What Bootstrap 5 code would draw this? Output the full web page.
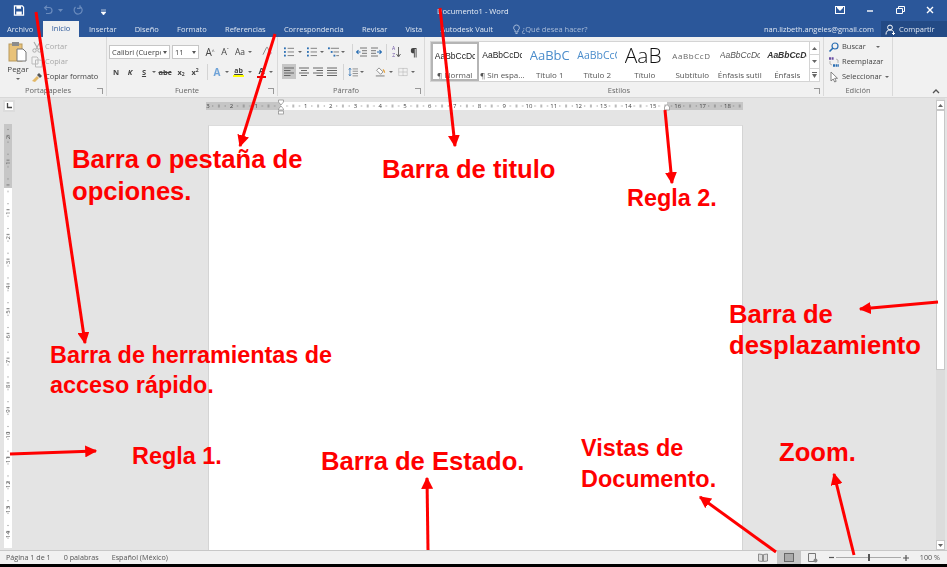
<!DOCTYPE html>
<html lang="es"><head><meta charset="utf-8"><title>Documento1 - Word</title>
<link href="https://cdn.jsdelivr.net/npm/bootstrap@5.3.0/dist/css/bootstrap.min.css" rel="stylesheet">
<style>
html,body{width:947px;height:567px;overflow:hidden;margin:0;background:#000}
body{font-family:"Open Sans","Liberation Sans",sans-serif;font-size:7.5px;color:#444;position:relative}
svg{display:block;flex:none}
.defs-holder{position:absolute}
.l1{margin-left:1px}.l2{margin-left:2px}.l3{margin-left:3px}.l4{margin-left:4px}.l5{margin-left:5px}.l6{margin-left:6px}.l7{margin-left:7px}.l9{margin-left:9px}.l10{margin-left:10px}.l11{margin-left:11px}.l15{margin-left:15px}.l17{margin-left:17px}.l18{margin-left:18px}
.w9{width:9px}.w11{width:11px}.w12{width:12px}.w14{width:14px}.w18{width:18px}
.app{width:947px;height:564px;background:#e4e4e4;filter:blur(.25px)}
.titlebar{height:21px;background:#2b579a;color:#fff;position:relative}
.doc-title{position:absolute;left:437px;top:5px;font-size:7.6px;line-height:12px;color:#e8eef6;white-space:nowrap}
.qat{padding:5px 0 0 13px}
.winbtns{position:absolute;right:2px;top:6px}
.wbtn{width:30px;display:flex;justify-content:center}
.tabbar{height:16px;background:#2b579a;color:#dde5f0;font-size:7.5px;line-height:16px;white-space:nowrap}
.tab-file{margin-left:7px;width:36px}
.tab-home{width:36px;background:#f1f1f1;color:#2b579a;text-align:center;margin-right:10px;margin-top:-1px;height:17px}
.tab-item{margin-right:18.2px}
.tellme{color:#a9bcd8;margin-left:20px;gap:2px}
.account{margin-left:auto;margin-right:7px}
.share{width:66px;background:#234a85;gap:3px;padding-left:4px}
.ribbon{height:61px;background:#f1f1f1;border-bottom:1px solid #d8d8d8;position:relative}
.rgroup{position:relative;height:59px;border-right:1px solid #d9d9d9;flex:none}
.gname{position:absolute;left:0;right:0;bottom:0;text-align:center;font-size:7.5px;line-height:12px;color:#666}
.gname-l{padding-right:10px}
.launch{position:absolute;right:3px;bottom:2px;width:6px;height:6px;border:1px solid #999;border-top:0;border-right:0;transform:rotate(180deg)}
.g1{width:107px}.g2{width:171px}.g3{width:147px}.g4{width:399px}.g5{width:69px}
.paste{position:absolute;left:6px;top:4px;width:24px;text-align:center;line-height:10px;font-size:8px}
.paste svg{margin:0 auto 2px}
.smalls{position:absolute;left:31px;top:2px;display:flex;flex-direction:column}
.smalls-ed{left:4px}
.sm{height:15px;line-height:15px;gap:2px;color:#444;white-space:nowrap}
.sm.off{color:#a8a8a8}
.rrow{position:absolute;left:0;right:0;height:15px;align-items:center}
.r1{top:7px}.r2{top:27px}
.combo{height:14px;background:#fff;border:1px solid #c6c6c6;line-height:12px;padding-left:2px;overflow:hidden;white-space:nowrap;color:#444;position:relative}
.combo::after{content:"";position:absolute;right:1px;top:0;width:7px;height:12px;background:#fff}
.combo::before{content:"";position:absolute;z-index:1;right:2px;top:5px;border:2px solid transparent;border-top:3px solid #555;border-bottom:0}
.cfont{width:61px;margin-left:2px}
.csize{width:27px;margin-left:2px}
.car{width:0;height:0;border:2px solid transparent;border-top:2.5px solid #666;border-bottom:0;flex:none}
.ifx{font-weight:700;color:#444;line-height:14px;text-align:center;flex:none;white-space:nowrap}
.thin{font-weight:400}
.fs6{font-size:5px;line-height:7px}.fs7{font-size:7px}.fs8{font-size:8.5px}.fs9{font-size:9px}.fs10{font-size:10px}.fs11{font-size:11px}
.it{font-style:italic}.un{text-decoration:underline}.st{text-decoration:line-through}
.blue-a{color:#6fa3d8}.purple{color:#6a4fa3}
.hl-y{line-height:9px;border-bottom:2px solid #ff0}
.hl-r{line-height:10px;border-bottom:2px solid #e00}
.sup5{font-size:5px}
.sepv{width:1px;height:16px;background:#d4d4d4;flex:none}
.alon{background:#c6c6c6;width:14px;height:15px;display:flex;align-items:center;justify-content:center;flex:none}
.gallery{position:absolute;left:5px;top:4px;height:41px;background:#fff;border:1px solid #d4d4d4;width:380px}
.gitem{width:47.5px;text-align:center;overflow:hidden;flex:none;height:39px;position:relative;white-space:nowrap}
.gitem.cur{border:2px solid #b5b5b5}
.gs{display:block;height:27px;line-height:27px;color:#222;font-family:"Liberation Sans",sans-serif;font-size:8.5px;overflow:hidden;width:40px;margin:0 auto;text-align:left}
.cur .gs{height:25px;line-height:25px}
.gn{display:block;line-height:12px;font-size:8px;color:#555}
.s-t1{font-size:13px;color:#4a8ccb;font-family:"Open Sans",sans-serif}
.s-t2{font-size:10.5px;color:#4a8ccb;font-family:"Open Sans",sans-serif}
.s-t{font-size:21px;color:#111;font-family:"Open Sans",sans-serif;font-weight:300}
.s-sub{letter-spacing:.6px;color:#666;font-family:"Open Sans",sans-serif;font-size:8px}
.s-em{font-style:italic;color:#555}
.s-emb{font-style:italic;font-weight:700;color:#333}
.gbtns{position:absolute;left:385px;top:4px;width:10px;height:41px;flex-direction:column;background:#fff;border:1px solid #d4d4d4;border-left:0}
.gbtn{flex:1;display:flex;align-items:center;justify-content:center;border-bottom:1px solid #d4d4d4}
.gbtn:last-child{border:0}
.ribbon-toggle{position:absolute;left:932px;top:52px}
.ws{height:452px;position:relative}
.leftcol{width:206px;flex:none}
.corner{width:12px;height:12px;background:#fff;border:2px solid #dcdcdc;margin:2px 0 0 3px;display:flex;align-items:center;justify-content:center}
.vruler{margin:12px 0 0 4px}
.midcol{width:537px;flex:none}
.hruler{margin-top:3px;overflow:visible}
.sheet{width:535px;height:425px;margin:10px 0 0 2px;background:#fff;border:1px solid #d4d4d4;border-bottom:0;border-top-color:#dcdcdc}
.sbar{width:9px;margin-left:auto;margin-right:2px;height:452px;background:#dcdcdc;flex-direction:column;padding-top:2px}
.sarrow{height:10px;background:#fff;border:1px solid #c8c8c8;display:flex;align-items:center;justify-content:center;flex:none}
.sthumb{height:260px;background:#fff;border:1px solid #c8c8c8;flex:none}
.sfill{flex:1}
.status{height:14px;background:#f1f1f1;border-top:1px solid #c8c8c8;font-size:7.2px;line-height:13px;color:#555;white-space:nowrap}
.st1{margin-left:6px;margin-right:13px}
.st2{margin-right:13px}
.vw{width:24px;height:13px;display:flex;align-items:center;justify-content:center;flex:none}
.vw.on{background:#c6c6c6}
.slider{width:65px;height:1px;background:#aaa;position:relative;margin:0 2px}
.slider::after{content:"";position:absolute;left:32px;top:-3px;width:2px;height:7px;background:#555}
.pct{margin-left:11px;margin-right:7px}
.overlay{position:absolute;left:0;top:0;pointer-events:none}
.lbl{position:absolute;color:#f00;font-family:"Liberation Sans",Arial,sans-serif;font-weight:700;white-space:nowrap;font-size:25.6px;line-height:31px}
.l23{font-size:23.4px;line-height:30px}
.a1{left:72px;top:143px;line-height:32px}.a2{left:382px;top:154px}.a3{left:627px;top:183px}.a4{left:729px;top:299px}.a5{left:50px;top:340px}.a6{left:132px;top:441px}.a7{left:321px;top:446px}.a8{left:581px;top:433px;line-height:31px}.a9{left:779px;top:437px}
</style></head>
<body>
<svg class="defs-holder" width="0" height="0"><defs>
<symbol id="save" viewBox="0 0 12 12"><path d="M1 1h8.500L11 2.500V11H1z" fill="none" stroke="#fff" stroke-width="1.300"/><path d="M3.200 1.200h5v3h-5zM3 7h6v3.600H3z" fill="#fff"/></symbol>
<symbol id="list" viewBox="0 0 11 11"><g fill="#2b6fb3"><rect x="0" y="1" width="2" height="2"/><rect x="0" y="5" width="2" height="2"/><rect x="0" y="9" width="2" height="2"/></g><path d="M4 2h7M4 6h7M4 10h7" stroke="#777"/></symbol>
<symbol id="multi" viewBox="0 0 12 11"><g fill="#2b6fb3"><rect x="0" y="1" width="2" height="2"/><rect x="3" y="5" width="2" height="2"/><rect x="6" y="9" width="2" height="2"/></g><path d="M3 2h9M6 6h6M9 10h3" stroke="#777"/></symbol>
<symbol id="al" viewBox="0 0 10 9"><path d="M0 1h10M0 3.500h6.500M0 6h10M0 8.500h6.500" stroke="#666"/></symbol>
<symbol id="ac" viewBox="0 0 10 9"><path d="M0 1h10M2 3.500h6M0 6h10M2 8.500h6" stroke="#666"/></symbol>
<symbol id="ar" viewBox="0 0 10 9"><path d="M0 1h10M3.500 3.500H10M0 6h10M3.500 8.500H10" stroke="#666"/></symbol>
<symbol id="aj" viewBox="0 0 10 9"><path d="M0 1h10M0 3.500h10M0 6h10M0 8.500h10" stroke="#666"/></symbol>
<symbol id="ind" viewBox="0 0 11 10"><path d="M4 1h7M6 3.700h5M6 6.300h5M4 9h7" stroke="#777"/><path d="M4.500 5H.5M2.500 3.200.5 5l2 1.800" fill="none" stroke="#2b6fb3" stroke-width="1.100"/></symbol>
<symbol id="oud" viewBox="0 0 11 10"><path d="M0 1h7M0 3.700h5M0 6.300h5M0 9h7" stroke="#777"/><path d="M6 5h4.500M8.500 3.200l2 1.800-2 1.800" fill="none" stroke="#2b6fb3" stroke-width="1.100"/></symbol>
<symbol id="up" viewBox="0 0 7 4"><path d="M3.500 0 7 4H0z" fill="#666"/></symbol>
<symbol id="dn" viewBox="0 0 7 4"><path d="M0 0h7L3.500 4z" fill="#666"/></symbol>
</defs></svg>

<div class="app d-flex flex-column">
  <div class="titlebar">
    <div class="qat d-flex align-items-start">
      <svg width="12" height="11"><use href="#save"/></svg>
      <svg class="l17" width="11" height="11" viewBox="0 0 11 11"><path d="M3 2.500H7a3 3 0 0 1 0 6H4M5 .6 2.600 2.800 5 5" fill="none" stroke="#6a8bbd" stroke-width="1.200"/></svg>
      <svg class="l5 mt-1" width="5" height="3" viewBox="0 0 5 3"><path d="M0 0h5L2.500 3z" fill="#6a8bbd"/></svg>
      <svg class="l10" width="10" height="11" viewBox="0 0 10 11"><path d="M7 1.500A4 4 0 1 1 2.500 2M7 .3V3.400H4" fill="none" stroke="#6a8bbd" stroke-width="1.200"/></svg>
      <svg class="l18 mt-1" width="5" height="6" viewBox="0 0 5 6"><path d="M0 1h5M0 3h5L2.500 6z" fill="#fff" stroke="#fff" stroke-width=".6"/></svg>
    </div>
    <div class="doc-title">Documento1 - Word</div>
    <div class="winbtns d-flex align-items-center">
      <div class="wbtn"><svg width="10" height="8" viewBox="0 0 10 8"><rect x=".5" y=".5" width="9" height="7" fill="none" stroke="#fff"/><path d="M2 1h6v1L5 5 2 2z" fill="#fff"/></svg></div>
      <div class="wbtn"><svg width="8" height="8" viewBox="0 0 8 8"><path d="M1 5h6" stroke="#fff" stroke-width="1.400"/></svg></div>
      <div class="wbtn"><svg width="9" height="8" viewBox="0 0 9 8"><path d="M.5 2.500h6v5h-6zM2.500 2.500v-2h6v5h-2" fill="none" stroke="#fff"/></svg></div>
      <div class="wbtn"><svg width="8" height="8" viewBox="0 0 8 8"><path d="M1 1l6 6M7 1 1 7" stroke="#fff" stroke-width="1.400"/></svg></div>
    </div>
  </div>
  <div class="tabbar d-flex">
    <div class="tab-file">Archivo</div>
    <div class="tab-home">Inicio</div>
    <div class="tab-item">Insertar</div>
    <div class="tab-item">Diseño</div>
    <div class="tab-item">Formato</div>
    <div class="tab-item">Referencias</div>
    <div class="tab-item">Correspondencia</div>
    <div class="tab-item">Revisar</div>
    <div class="tab-item">Vista</div>
    <div>Autodesk Vault</div>
    <div class="tellme d-flex align-items-center"><svg width="7" height="11" viewBox="0 0 7 11"><path d="M3.500 1a2.800 2.800 0 0 0-1.500 5.200V8h3V6.200A2.800 2.800 0 0 0 3.500 1zM2.500 9.500h2" fill="none" stroke="#c3d1e6" stroke-width=".8"/></svg>¿Qué desea hacer?</div>
    <div class="account">nan.lizbeth.angeles@gmail.com</div>
    <div class="share d-flex align-items-center"><svg width="11" height="11" viewBox="0 0 11 11"><circle cx="5" cy="3.500" r="2.400" fill="none" stroke="#fff"/><path d="M1 10.500c0-3 1.500-4.500 4-4.500s3 .8 3.600 2M8.500 8v3M7 9.500h3" fill="none" stroke="#fff"/></svg>Compartir</div>
  </div>

  <div class="ribbon d-flex">
    <div class="rgroup g1">
      <div class="paste">
        <svg width="20" height="21" viewBox="0 0 20 21"><rect x="1" y="3" width="13" height="17" fill="#e8c27a" stroke="#b99a5c"/><rect x="4" y="1" width="7" height="4" fill="#8c8c8c"/><path d="M9 8h6l3 3v9H9z" fill="#fff" stroke="#777"/></svg>
        <div>Pegar</div><div class="car mx-auto mt-1"></div>
      </div>
      <div class="smalls">
        <div class="sm off d-flex align-items-center"><svg width="12" height="12" viewBox="0 0 12 12"><path d="M3 1l4 7M9 1 5 8" stroke="#aaa" stroke-width="1.100"/><circle cx="3.500" cy="9.500" r="1.700" fill="none" stroke="#aaa"/><circle cx="8.500" cy="9.500" r="1.700" fill="none" stroke="#aaa"/></svg>Cortar</div>
        <div class="sm off d-flex align-items-center"><svg width="12" height="12" viewBox="0 0 12 12"><path d="M1 1h5l1 1v6H1zM4.500 4h5L11 5.500V11H4.500z" fill="#f4f4f4" stroke="#bbb"/></svg>Copiar</div>
        <div class="sm d-flex align-items-center"><svg width="12" height="12" viewBox="0 0 12 12"><path d="M1 10l5-5 2 2-4 4z" fill="#e3b866"/><path d="M6 4l2-2 3 3-2 2z" fill="#555"/></svg>Copiar formato</div>
      </div>
      <div class="gname gname-l">Portapapeles</div><div class="launch"></div>
    </div>

    <div class="rgroup g2">
      <div class="rrow r1 d-flex">
        <div class="combo cfont">Calibri (Cuerpo</div><div class="combo csize">11</div>
        <div class="ifx thin fs10 w14 l4">A<sup class="sup5">^</sup></div>
        <div class="ifx thin fs9 w14 l1">A<sup class="sup5">ˇ</sup></div>
        <div class="ifx thin fs8 l3">Aa</div><div class="car l3"></div>
        <svg class="l10" width="11" height="11" viewBox="0 0 12 11"><path d="M1 9 5 1h1l3 7" fill="none" stroke="#888"/><path d="M6 8l3-3 2 2-3 3z" fill="#d79fb5"/></svg>
      </div>
      <div class="rrow r2 d-flex">
        <div class="ifx w14 l2">N</div>
        <div class="ifx w14 it">K</div>
        <div class="ifx w14 un">S</div>
        <div class="car l1"></div>
        <div class="ifx w18 st">abc</div>
        <div class="ifx w14">x<sub class="sup5">2</sub></div>
        <div class="ifx w14">x<sup class="sup5">2</sup></div>
        <div class="sepv l5"></div>
        <div class="ifx w12 l3 blue-a fs10">A</div><div class="car l2"></div>
        <div class="ifx w11 l4 fs7 hl-y un">ab</div><div class="car l4"></div>
        <div class="ifx w9 l5 fs9 hl-r">A</div><div class="car l3"></div>
      </div>
      <div class="gname gname-l">Fuente</div><div class="launch"></div>
    </div>

    <div class="rgroup g3">
      <div class="rrow r1 d-flex">
        <svg class="l6" width="10" height="11"><use href="#list"/></svg><div class="car l4"></div>
        <svg class="l5" width="10" height="11"><use href="#list"/></svg><div class="car l3"></div>
        <svg class="l4" width="11" height="11"><use href="#multi"/></svg><div class="car l2"></div>
        <div class="sepv l7"></div>
        <svg class="l3" width="11" height="10"><use href="#ind"/></svg>
        <svg class="l4" width="11" height="10"><use href="#oud"/></svg>
        <div class="sepv l4"></div>
        <div class="ifx thin fs6 purple l5">A<br>Z</div>
        <svg class="l1" width="5" height="12" viewBox="0 0 5 12"><path d="M2.500 1v9M.5 8l2 3 2-3" fill="none" stroke="#666"/></svg>
        <div class="ifx fs11 l9">¶</div>
      </div>
      <div class="rrow r2 d-flex">
        <div class="alon l4"><svg width="10" height="9"><use href="#al"/></svg></div>
        <svg class="l3" width="10" height="9"><use href="#ac"/></svg>
        <svg class="l4" width="10" height="9"><use href="#ar"/></svg>
        <svg class="l4" width="10" height="9"><use href="#aj"/></svg>
        <div class="sepv l6"></div>
        <svg class="l4" width="10" height="12" viewBox="0 0 13 12"><path d="M2.500 1v10M1 3l1.500-2L4 3M1 9l1.500 2L4 9" fill="none" stroke="#2b6fb3"/><path d="M6 2h7M6 5h7M6 8h7M6 11h7" stroke="#777"/></svg>
        <div class="car l2"></div>
        <svg class="l11" width="12" height="13" viewBox="0 0 15 13"><path d="M5 2l5 5-3 3-5-5z" fill="#fff" stroke="#777"/><path d="M10 4c2 2 2 3 2 4" stroke="#e6a33e" stroke-width="1.500" fill="none"/><rect x="1" y="11" width="11" height="2" fill="#aaa"/></svg>
        <div class="car l2"></div>
        <svg class="l5" width="10" height="10" viewBox="0 0 14 12"><path d="M1 1h12v10H1zM7 1v10M1 6h12" fill="none" stroke="#aaa" stroke-dasharray="1 .5"/></svg>
        <div class="car l3"></div>
      </div>
      <div class="gname gname-l">Párrafo</div><div class="launch"></div>
    </div>

    <div class="rgroup g4">
      <div class="gallery d-flex">
        <div class="gitem cur"><span class="gs">AaBbCcDc</span><span class="gn">¶ Normal</span></div>
        <div class="gitem"><span class="gs">AaBbCcDc</span><span class="gn">¶ Sin espa...</span></div>
        <div class="gitem"><span class="gs s-t1">AaBbCc</span><span class="gn">Título 1</span></div>
        <div class="gitem"><span class="gs s-t2">AaBbCcC</span><span class="gn">Título 2</span></div>
        <div class="gitem"><span class="gs s-t">AaB</span><span class="gn">Título</span></div>
        <div class="gitem"><span class="gs s-sub">AaBbCcD</span><span class="gn">Subtítulo</span></div>
        <div class="gitem"><span class="gs s-em">AaBbCcDc</span><span class="gn">Énfasis sutil</span></div>
        <div class="gitem"><span class="gs s-emb">AaBbCcDc</span><span class="gn">Énfasis</span></div>
      </div>
      <div class="gbtns d-flex">
        <div class="gbtn"><svg width="5" height="3"><use href="#up"/></svg></div>
        <div class="gbtn"><svg width="5" height="3"><use href="#dn"/></svg></div>
        <div class="gbtn"><svg width="5" height="6" viewBox="0 0 5 6"><path d="M0 0h5v1H0zM0 2h5L2.500 6z" fill="#666"/></svg></div>
      </div>
      <div class="gname gname-l">Estilos</div><div class="launch"></div>
    </div>

    <div class="rgroup g5">
      <div class="smalls smalls-ed">
        <div class="sm d-flex align-items-center"><svg width="12" height="12" viewBox="0 0 12 12"><circle cx="7" cy="5" r="3" fill="none" stroke="#2b6fb3" stroke-width="1.200"/><path d="M5 7 1.500 10.500" stroke="#2b6fb3" stroke-width="1.600"/></svg><span class="me-2">Buscar</span><div class="car"></div></div>
        <div class="sm d-flex align-items-center"><svg width="12" height="12" viewBox="0 0 12 12"><path d="M1 2.500h5" stroke="#6a4fa3" stroke-width="2.500" stroke-dasharray="2 .6"/><path d="M5 9.500h6" stroke="#2b6fb3" stroke-width="2.500" stroke-dasharray="2 .6"/><path d="M2 5v3l2 1M10 7V4L8 3" fill="none" stroke="#999" stroke-width=".7"/></svg>Reemplazar</div>
        <div class="sm d-flex align-items-center"><svg width="12" height="12" viewBox="0 0 12 12"><path d="M3 1v9l2.200-2 1.500 3 1.500-.7-1.500-3H9.500z" fill="#fff" stroke="#777" stroke-width=".9"/></svg>Seleccionar<div class="car l1"></div></div>
      </div>
      <div class="gname">Edición</div>
    </div>
    <svg class="ribbon-toggle" width="8" height="5" viewBox="0 0 8 5"><path d="M1 4l3-3 3 3" fill="none" stroke="#555" stroke-width="1.300"/></svg>
  </div>

  <div class="ws d-flex">
    <div class="leftcol">
      <div class="corner"><svg width="6" height="6" viewBox="0 0 6 6"><path d="M1.500 0v4.500H6" fill="none" stroke="#444" stroke-width="1.300"/></svg></div>
      <svg class="vruler" width="8" height="424" viewBox="0 0 8 424" font-size="6" font-family="Open Sans" fill="#555" text-anchor="middle">
        <defs><pattern id="vt" width="8" height="24.750" patternUnits="userSpaceOnUse" y="-1"><rect x="3.500" y="6" width="1" height="1" fill="#777"/><rect x="2.500" y="12" width="3" height="1" fill="#777"/><rect x="3.500" y="18.500" width="1" height="1" fill="#777"/></pattern></defs>
        <rect width="8" height="64" fill="#c6c6c6"/><rect y="64" width="8" height="360" fill="#fff"/><rect width="8" height="424" fill="url(#vt)"/>
        <g>
          <text transform="translate(6.300 13.500) rotate(-90)">2</text><text transform="translate(6.300 39) rotate(-90)">1</text>
          <text transform="translate(6.300 89) rotate(-90)">1</text><text transform="translate(6.300 113.700) rotate(-90)">2</text><text transform="translate(6.300 138.500) rotate(-90)">3</text><text transform="translate(6.300 163.200) rotate(-90)">4</text><text transform="translate(6.300 188) rotate(-90)">5</text><text transform="translate(6.300 212.700) rotate(-90)">6</text><text transform="translate(6.300 237.500) rotate(-90)">7</text><text transform="translate(6.300 262.200) rotate(-90)">8</text><text transform="translate(6.300 287) rotate(-90)">9</text><text transform="translate(6.300 311) rotate(-90)">10</text><text transform="translate(6.300 335.500) rotate(-90)">11</text><text transform="translate(6.300 360.500) rotate(-90)">12</text><text transform="translate(6.300 385.500) rotate(-90)">13</text><text transform="translate(6.300 410.500) rotate(-90)">14</text>
        </g>
      </svg>
    </div>
    <div class="midcol">
      <svg class="hruler" width="537" height="14" viewBox="0 0 537 14" font-size="6" font-family="Open Sans" fill="#444" text-anchor="middle">
        <defs><pattern id="ht" width="24.800" height="14" patternUnits="userSpaceOnUse"><rect x="6.200" y="4.500" width="1" height="1" fill="#777"/><rect x="12.400" y="3.500" width="1" height="3" fill="#777"/><rect x="18.600" y="4.500" width="1" height="1" fill="#777"/></pattern></defs>
        <rect y="1" width="75" height="8" fill="#c6c6c6"/><rect x="75" y="1" width="386" height="8" fill="#fff"/><rect x="461" y="1" width="76" height="8" fill="#c6c6c6"/>
        <rect y="1" width="537" height="8" fill="url(#ht)"/>
        <g>
          <text x="2" y="7.300">3</text><text x="25.400" y="7.300">2</text><text x="50.200" y="7.300">1</text><text x="99.800" y="7.300">1</text><text x="124.600" y="7.300">2</text><text x="149.400" y="7.300">3</text><text x="174.200" y="7.300">4</text><text x="199" y="7.300">5</text><text x="223.800" y="7.300">6</text><text x="248.600" y="7.300">7</text><text x="273.400" y="7.300">8</text><text x="298.200" y="7.300">9</text><text x="323" y="7.300">10</text><text x="347.800" y="7.300">11</text><text x="372.600" y="7.300">12</text><text x="397.400" y="7.300">13</text><text x="422.200" y="7.300">14</text><text x="447" y="7.300">15</text><text x="471.800" y="7.300">16</text><text x="496.600" y="7.300">17</text><text x="521.400" y="7.300">18</text>
        </g>
        <path d="M72.500-1h5v2l-2.500 3-2.500-3zM75 5l2.500 3v1h-5V8z" fill="#fff" stroke="#888" stroke-width=".7"/><rect x="72.500" y="10" width="5" height="3" fill="#fff" stroke="#888" stroke-width=".7"/>
        <path d="M458.500 9V6l2.500-2.500L463.500 6v3z" fill="#fff" stroke="#888" stroke-width=".7"/>
      </svg>
      <div class="sheet"></div>
    </div>
    <div class="sbar d-flex">
      <div class="sarrow"><svg width="5" height="3"><use href="#up"/></svg></div>
      <div class="sthumb"></div>
      <div class="sfill"></div>
      <div class="sarrow"><svg width="5" height="3"><use href="#dn"/></svg></div>
    </div>
  </div>

  <div class="status d-flex align-items-center">
    <span class="st1">Página 1 de 1</span><span class="st2">0 palabras</span><span>Español (México)</span>
    <svg class="ms-auto" width="10" height="9" viewBox="0 0 10 9"><path d="M.5 1 4.500 1.500V8.500L.5 8zM9.500 1 5.500 1.500V8.500L9.500 8z" fill="#ddd" stroke="#777" stroke-width=".8"/></svg>
    <div class="vw on l9"><svg width="10" height="9" viewBox="0 0 10 9"><rect x=".5" y=".5" width="9" height="8" fill="#aaa" stroke="#666"/></svg></div>
    <div class="vw"><svg width="10" height="10" viewBox="0 0 10 10"><path d="M.5.5h7v8h-7z" fill="#eee" stroke="#777"/><circle cx="7.500" cy="7.500" r="2" fill="#888"/></svg></div>
    <svg class="l4" width="5" height="3" viewBox="0 0 5 3"><path d="M0 1.500h5" stroke="#555" stroke-width="1.200"/></svg>
    <div class="slider"></div>
    <svg width="6" height="6" viewBox="0 0 6 6"><path d="M0 3h6M3 0v6" stroke="#555" stroke-width="1.200"/></svg>
    <span class="pct">100 %</span>
  </div>
</div>

<svg class="overlay" width="947" height="567" viewBox="0 0 947 567">
  <defs><marker id="h" viewBox="0 0 10 10" refX="9" refY="5" markerWidth="4" markerHeight="4" orient="auto" markerUnits="strokeWidth"><path d="M0 0 10 5 0 10z" fill="#f00"/></marker></defs>
  <g stroke="#f00" stroke-width="3" fill="none">
    <line x1="36" y1="12" x2="85" y2="343" marker-end="url(#h)"/>
    <line x1="275" y1="34" x2="240" y2="146" marker-end="url(#h)"/>
    <line x1="440" y1="8" x2="455" y2="146" marker-end="url(#h)"/>
    <line x1="665" y1="110" x2="672" y2="183" marker-end="url(#h)"/>
    <line x1="938" y1="302" x2="860" y2="309" marker-end="url(#h)"/>
    <line x1="10" y1="454" x2="96" y2="451" marker-end="url(#h)"/>
    <line x1="428" y1="550" x2="427" y2="478" marker-end="url(#h)"/>
    <line x1="776" y1="552" x2="700" y2="497" marker-end="url(#h)"/>
    <line x1="854" y1="555" x2="834" y2="474" marker-end="url(#h)"/>
  </g>
</svg>
<div class="lbl a1">Barra o pestaña de<br>opciones.</div>
<div class="lbl a2">Barra de titulo</div>
<div class="lbl l23 a3">Regla 2.</div>
<div class="lbl a4">Barra de<br>desplazamiento</div>
<div class="lbl l23 a5">Barra de herramientas de<br>acceso rápido.</div>
<div class="lbl l23 a6">Regla 1.</div>
<div class="lbl a7">Barra de Estado.</div>
<div class="lbl l23 a8">Vistas de<br>Documento.</div>
<div class="lbl a9">Zoom.</div>
</body></html>
